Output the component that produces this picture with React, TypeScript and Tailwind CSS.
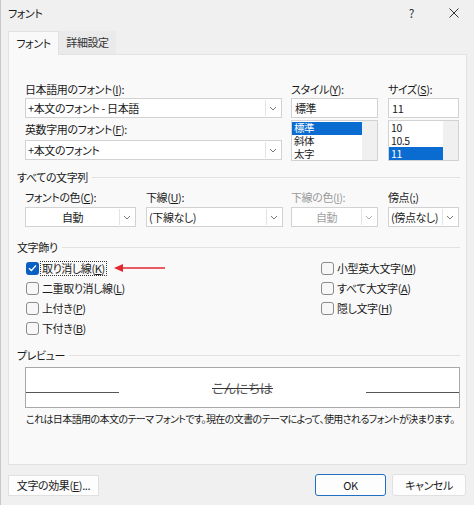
import React from "react";

function Chevron({ color = "#7a7a7a" }: { color?: string }) {
  return (
    <svg width="8" height="5" viewBox="0 0 8 5">
      <path d="M1 1 L4 4 L7 1" fill="none" stroke={color} strokeWidth="1" />
    </svg>
  );
}

function Combo({
  text,
  center,
  disabled,
  className,
}: {
  text: string;
  center?: boolean;
  disabled?: boolean;
  className: string;
}) {
  return (
    <div className={`h-[20px] border border-[#d2d2d2] bg-white flex ${className}`}>
      <div
        className={`flex-1 flex items-center px-[2px] text-[11px] whitespace-nowrap overflow-hidden ${center ? "justify-center" : ""} ${
          disabled ? "text-[#a0a0a0]" : "text-[#1a1a1a]"
        }`}
      >
        {text}
      </div>
      <div className="w-[15px] shrink-0 my-[1px] mr-[1px] border-l border-[#e3e3e3] bg-white flex items-center justify-center">
        <Chevron color={disabled ? "#b0b0b0" : "#7a7a7a"} />
      </div>
    </div>
  );
}

function Check({ checked }: { checked?: boolean }) {
  if (checked) {
    return (
      <div className="w-[13px] h-[13px] rounded-[3px] bg-[#0a5fc2] flex items-center justify-center shrink-0">
        <svg width="9" height="8" viewBox="0 0 9 8">
          <path d="M1 4.2 L3.4 6.5 L8 1.5" fill="none" stroke="white" strokeWidth="1.3" />
        </svg>
      </div>
    );
  }
  return <div className="w-[13px] h-[13px] rounded-[3px] border border-[#8c8c8c] bg-[#f7f7f7] shrink-0" />;
}

function CheckRow({
  label,
  k,
  checked,
  focus,
}: {
  label: string;
  k: string;
  checked?: boolean;
  focus?: boolean;
}) {
  return (
    <div className="h-[20px] flex items-center gap-[1px]">
      <Check checked={checked} />
      <span
        className={`text-[11px] text-[#1a1a1a] leading-[13px] px-[1px] whitespace-nowrap ${
          focus ? "border border-dotted border-[#333]" : "border border-transparent"
        }`}
      >
        {label}(<u>{k}</u>)
      </span>
    </div>
  );
}

function GroupHeader({ text }: { text: string }) {
  return (
    <div className="flex items-center h-[14px] pl-[8px] pr-[6px]">
      <span className="text-[11px] text-[#1a1a1a] leading-[14px]">{text}</span>
      <div className="flex-1 h-[1px] bg-[#e2e2e2] ml-[4px]" />
    </div>
  );
}

function ListRow({ text, selected }: { text: string; selected?: boolean }) {
  return (
    <div
      className={`h-[13px] flex items-center px-[2px] text-[10.5px] leading-[12px] ${
        selected ? "bg-[#0a6cd0] text-white" : ""
      }`}
    >
      {text}
    </div>
  );
}

export default function App() {
  return (
    <div className="w-[474px] h-[505px] bg-[#f0f0f0] overflow-hidden font-['Noto_Sans_CJK_JP',sans-serif] [font-feature-settings:'palt'] tracking-[-0.4px] text-[#1a1a1a] border-l border-[#c8c8c8]">
      {/* title bar */}
      <div className="h-[26px] flex items-center pl-[7px] pr-[15px]">
        <span className="text-[11px]">フォント</span>
        <div className="flex-1" />
        <span className="text-[12px] text-[#333] mr-[35px]">?</span>
        <svg width="10" height="10" viewBox="0 0 10 10">
          <path d="M0.5 0.5 L9.5 9.5 M9.5 0.5 L0.5 9.5" stroke="#333" strokeWidth="1" />
        </svg>
      </div>
      {/* tabs */}
      <div className="h-[24px] mt-[4px] pl-[7px] flex items-end">
        <div className="w-[51px] h-[24px] bg-[#f9f9f9] border-t border-l border-r border-[#e2e2e2] flex items-center justify-center text-[11px] relative top-[1px] z-10">
          フォント
        </div>
        <div className="w-[57px] h-[23px] bg-[#eaeaea] flex items-center justify-center text-[11px] text-[#333]">
          詳細設定
        </div>
      </div>
      {/* panel */}
      <div className="ml-[7px] w-[459px] h-[411px] bg-[#f9f9f9] border border-[#e2e2e2] flex flex-col">
        {/* fonts row */}
        <div className="mt-[27px] pl-[16px] flex">
          <div className="w-[257px] flex flex-col">
            <div className="text-[11px] leading-[14px]">
              日本語用のフォント(<u>I</u>):
            </div>
            <Combo className="mt-[2px]" text="+本文のフォント - 日本語" />
            <div className="text-[11px] leading-[14px] mt-[4px]">
              英数字用のフォント(<u>F</u>):
            </div>
            <Combo className="mt-[4px]" text="+本文のフォント" />
          </div>
          <div className="w-[87px] ml-[9px] flex flex-col">
            <div className="text-[11px] leading-[14px]">
              スタイル(<u>Y</u>):
            </div>
            <div className="mt-[2px] h-[20px] border border-[#d2d2d2] bg-white text-[11px] flex items-center px-[3px]">
              標準
            </div>
            <div className="mt-[2px] h-[41px] border border-[#d2d2d2] bg-white flex">
              <div className="flex-1 flex flex-col pt-[1px]">
                <ListRow text="標準" selected />
                <ListRow text="斜体" />
                <ListRow text="太字" />
              </div>
              <div className="w-[15px] bg-[#f0f0f0]" />
            </div>
          </div>
          <div className="w-[71px] ml-[10px] flex flex-col">
            <div className="text-[11px] leading-[14px]">
              サイズ(<u>S</u>):
            </div>
            <div className="mt-[2px] h-[20px] border border-[#d2d2d2] bg-white text-[11px] flex items-center px-[3px]">
              11
            </div>
            <div className="mt-[2px] h-[41px] border border-[#d2d2d2] bg-white flex">
              <div className="flex-1 flex flex-col pt-[1px]">
                <ListRow text="10" />
                <ListRow text="10.5" />
                <ListRow text="11" selected />
              </div>
              <div className="w-[15px] bg-[#f0f0f0]" />
            </div>
          </div>
        </div>

        {/* all text */}
        <div className="mt-[9px]">
          <GroupHeader text="すべての文字列" />
        </div>
        <div className="mt-[6px] pl-[16px] flex">
          <div className="w-[111px] flex flex-col">
            <div className="text-[11px] leading-[14px]">
              フォントの色(<u>C</u>):
            </div>
            <Combo className="mt-[3px]" text="自動" center />
          </div>
          <div className="w-[137px] ml-[10px] flex flex-col">
            <div className="text-[11px] leading-[14px]">
              下線(<u>U</u>):
            </div>
            <Combo className="mt-[3px]" text="(下線なし)" />
          </div>
          <div className="w-[87px] ml-[8px] flex flex-col">
            <div className="text-[11px] leading-[14px] text-[#9a9a9a]">
              下線の色(<u>I</u>):
            </div>
            <Combo className="mt-[3px]" text="自動" center disabled />
          </div>
          <div className="w-[71px] ml-[10px] flex flex-col">
            <div className="text-[11px] leading-[14px]">
              傍点(<u>;</u>)
            </div>
            <Combo className="mt-[3px]" text="(傍点なし)" />
          </div>
        </div>

        {/* decorations */}
        <div className="mt-[13px]">
          <GroupHeader text="文字飾り" />
        </div>
        <div className="mt-[4px] pl-[17px] flex">
          <div className="w-[295px] flex flex-col">
            <div className="flex items-center">
              <CheckRow label="取り消し線" k="K" checked focus />
              <svg width="52" height="10" viewBox="0 0 52 10" className="ml-[7px]">
                <path d="M4 5 L51 5" stroke="#e0282e" strokeWidth="1.6" />
                <path d="M0 5 L9 1 L9 9 Z" fill="#e0282e" />
              </svg>
            </div>
            <CheckRow label="二重取り消し線" k="L" />
            <CheckRow label="上付き" k="P" />
            <CheckRow label="下付き" k="B" />
          </div>
          <div className="flex flex-col">
            <CheckRow label="小型英大文字" k="M" />
            <CheckRow label="すべて大文字" k="A" />
            <CheckRow label="隠し文字" k="H" />
          </div>
        </div>

        {/* preview */}
        <div className="mt-[10px]">
          <GroupHeader text="プレビュー" />
        </div>
        <div className="mt-[5px] ml-[16px] w-[435px] h-[41px] border border-[#a8a8a8] bg-white flex items-center">
          <div className="w-[93px] h-[1px] bg-[#555] mt-[10px]" />
          <div className="flex-1 flex justify-center">
            <span className="relative text-[13px] leading-[18px] text-[#555] tracking-[0px]">
              こんにちは
              <span className="absolute left-0 right-0 top-[9px] h-[1px] bg-[#333]" />
            </span>
          </div>
          <div className="w-[93px] h-[1px] bg-[#555] mt-[10px]" />
        </div>
        <div className="mt-[4px] pl-[17px] text-[10px] tracking-[-0.6px] leading-[14px] text-[#1a1a1a] whitespace-nowrap">
          これは日本語用の本文のテーマ フォントです。現在の文書のテーマによって、使用されるフォントが決まります。
        </div>
      </div>

      {/* buttons */}
      <div className="mt-[9px] pl-[7px] pr-[8px] flex items-center">
        <div className="w-[91px] h-[21px] bg-[#fdfdfd] border border-[#e0e0e0] flex items-center justify-center text-[11px]">
          文字の効果(<u>E</u>)...
        </div>
        <div className="flex-1" />
        <div className="w-[71px] h-[22px] bg-[#fdfdfd] border border-[#1f6fc5] rounded-[3px] flex items-center justify-center text-[11px]">
          OK
        </div>
        <div className="w-[74px] h-[22px] ml-[6px] bg-[#fdfdfd] border border-[#e0e0e0] rounded-[3px] flex items-center justify-center text-[11px]">
          キャンセル
        </div>
      </div>
    </div>
  );
}
